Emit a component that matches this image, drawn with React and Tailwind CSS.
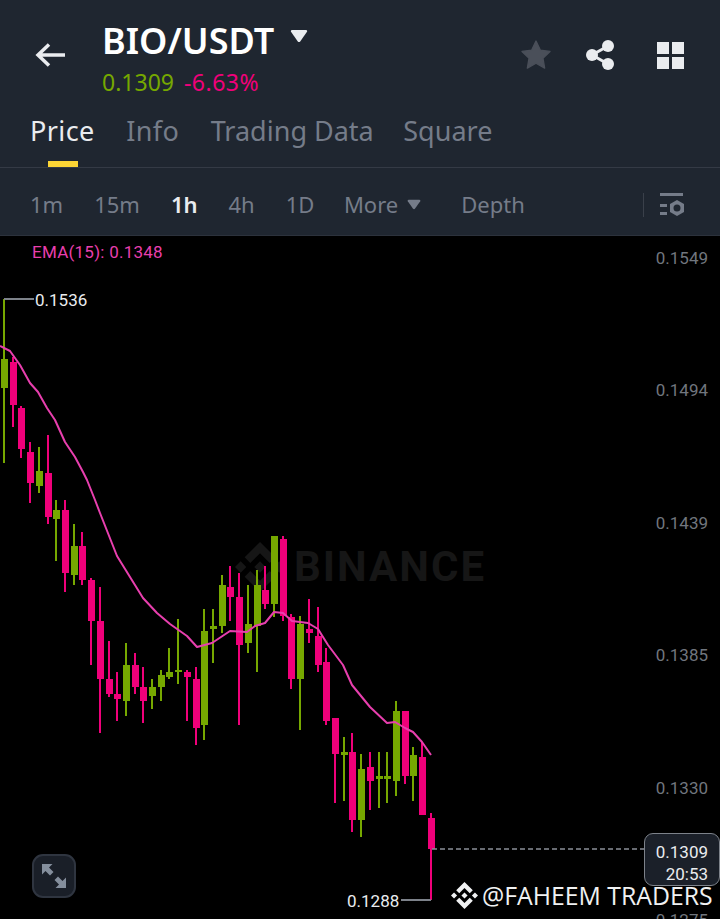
import React from 'react';

const GREEN = '#76a800';
const PINK = '#f0007a';

// color, wick top, wick bottom, body top, body bottom
const candles = [
  ['g', 299, 463, 359, 388], ['r', 357, 427, 362, 405], ['r', 406, 458, 408, 449], ['r', 442, 503, 452, 483],
  ['g', 447, 493, 471, 486], ['r', 435, 524, 473, 517], ['g', 500, 561, 510, 519], ['r', 500, 592, 510, 573],
  ['g', 524, 585, 546, 575], ['r', 532, 585, 546, 580], ['r', 578, 665, 580, 621], ['r', 587, 733, 621, 679],
  ['r', 641, 697, 679, 694], ['r', 672, 721, 694, 699], ['g', 643, 716, 665, 701], ['r', 653, 694, 665, 687],
  ['r', 667, 723, 687, 701], ['g', 679, 709, 687, 696], ['g', 670, 701, 675, 687], ['g', 648, 679, 672, 677],
  ['g', 619, 684, 670, 672], ['r', 670, 721, 672, 677], ['r', 667, 745, 679, 728], ['g', 609, 740, 631, 725],
  ['g', 609, 663, 626, 629], ['g', 575, 633, 585, 626], ['r', 566, 621, 587, 597], ['r', 573, 725, 597, 645],
  ['g', 585, 653, 624, 643], ['g', 570, 672, 585, 626], ['r', 566, 609, 590, 604], ['g', 536, 617, 536, 604],
  ['r', 536, 621, 539, 616], ['r', 614, 689, 617, 679], ['g', 616, 730, 624, 679], ['r', 599, 643, 629, 633],
  ['r', 607, 672, 636, 665], ['r', 648, 725, 662, 721], ['r', 718, 803, 718, 754], ['g', 737, 801, 752, 755],
  ['r', 733, 832, 752, 820], ['g', 754, 837, 769, 820], ['r', 752, 810, 767, 781], ['g', 752, 808, 776, 779],
  ['g', 752, 803, 776, 779], ['g', 701, 796, 711, 781], ['r', 711, 784, 711, 776], ['g', 747, 801, 755, 776],
  ['r', 742, 815, 757, 815], ['r', 813, 900, 818, 849],
];

const ema = '0,346 10,351 20,365 30,383 38,392 47,408 55,420 65,442 75,457 83,472 87,480 95,500 100,513 117,556 143,598 157,613 170,624 187,636 197,647 212,643 230,631 247,632 255,626 265,623 274,612 283,613 292,621 300,622 308,623 318,629 328,645 343,665 352,685 370,707 387,723 395,722 405,728 413,732 422,742 431,755';

const axisLabels = ['0.1549', '0.1494', '0.1439', '0.1385', '0.1330', '0.1275'];
const BINANCE_PATH = 'm38.73 53.2 24.59-24.58 24.6 24.6 14.3-14.31L63.32 0 24.42 38.9zM0 63.31l14.3-14.31 14.31 14.31-14.31 14.3zM38.73 73.41 63.32 98l24.6-24.6 14.31 14.29-38.9 38.91-38.91-38.88zM98 63.31l14.3-14.31 14.31 14.3-14.31 14.32zM77.83 63.3 63.32 48.78 52.59 59.51l-1.24 1.23-2.54 2.54 14.51 14.5 14.51-14.47z';

const Triangle = ({ className }) => (
  <svg viewBox="0 0 18 14" className={className} fill="currentColor">
    <path d="M2 1h14c1 0 1.500 1 1 1.800L10.200 12.400c-.6.800-1.800.8-2.400 0L1 2.800C.5 2 1 1 2 1z" />
  </svg>
);

const Chart = () => (
  <div className="relative flex-1 overflow-hidden bg-black font-['Roboto',sans-serif]">
    {/* watermark sits under the candles */}
    <div className="absolute left-[235px] top-[306px] flex items-center gap-[9px] text-[#161616]">
      <svg viewBox="0 0 126.61 126.61" className="h-[50px] w-[50px]" fill="currentColor">
        <path d={BINANCE_PATH} />
      </svg>
      <span className="text-[42px] font-bold leading-none tracking-[2px]">BINANCE</span>
    </div>

    {/* chart coordinates are page coordinates, hence the viewBox offset */}
    <svg viewBox="0 236 720 683" className="absolute inset-0 h-[683px] w-[720px]">
      <g shapeRendering="crispEdges">
        {candles.map(([c, wt, wb, bt, bb], i) => {
          const x = Math.round(4 + i * 8.71);
          const fill = c === 'g' ? GREEN : PINK;
          return (
            <g key={i} fill={fill}>
              <rect x={x - 1} y={wt} width="2" height={wb - wt} />
              <rect x={x - 3} y={bt} width="7" height={bb - bt} />
            </g>
          );
        })}
        <rect x="4" y="298" width="30" height="1.500" fill="#7d828a" />
        <rect x="401" y="899" width="30" height="1.500" fill="#7d828a" />
      </g>
      <polyline points={ema} fill="none" stroke="#e83fae" strokeWidth="2" strokeLinejoin="round" />
      <line x1="432" y1="849" x2="644" y2="849" stroke="#8a8f98" strokeWidth="1.500" strokeDasharray="5 3" />
    </svg>

    <div className="absolute left-[32px] top-[5px] text-[17px] leading-[22px] tracking-[0.25px] text-[#e83fae]">EMA(15): 0.1348</div>
    <div className="absolute left-[35px] top-[53px] text-[17px] leading-[22px] text-[#eaecef]">0.1536</div>
    <div className="absolute left-[347px] top-[654px] text-[17px] leading-[22px] text-[#eaecef]">0.1288</div>

    {/* right price axis */}
    <div className="absolute right-[12px] top-[11px] flex flex-col items-end">
      {axisLabels.map((label) => (
        <div key={label} className="h-[132.4px] text-[17px] leading-[22px] text-[#71767e]">{label}</div>
      ))}
    </div>

    <div className="absolute left-[32px] top-[618px] flex h-[44px] w-[44px] items-center justify-center rounded-[11px] border-2 border-[#2f3540] bg-[#1a1f28]">
      <svg viewBox="0 0 28 28" className="h-[28px] w-[28px]" fill="#848e9c">
        <path d="M2 2h10.500L9 5.500l4.500 4.500-3.500 3.500L5.500 9 2 12.500z" />
        <path d="M26 26H15.500l3.500-3.500-4.500-4.500 3.500-3.500 4.500 4.500 3.500-3.500z" />
      </svg>
    </div>

    <div className="absolute left-[644px] top-[597px] flex h-[53px] w-[76px] flex-col items-end justify-center rounded-[9px] border border-[#7d828a] bg-[#1b2029] pr-[11px] pt-[7px] text-[17px] leading-[22px] text-[#eaecef]">
      <span>0.1309</span>
      <span>20:53</span>
    </div>

    <div className="absolute left-[451px] top-[642px] flex items-center gap-[4px] text-[#f0f1f2]">
      <svg viewBox="0 0 126.61 126.61" className="h-[27px] w-[27px]" fill="currentColor">
        <path d={BINANCE_PATH} />
      </svg>
      <span className="font-['Open_Sans',sans-serif] text-[24.8px] leading-[34px]">@FAHEEM TRADERS</span>
    </div>
  </div>
);

export default function App() {
  return (
    <div className="flex h-[919px] w-[720px] flex-col overflow-hidden bg-black font-['Noto_Sans',sans-serif]">
      <div className="flex h-[236px] flex-col border-b border-[#2c323c] bg-[#1f2630]">
        <div className="flex h-[106px] items-start">
          <div className="ml-[35px] mt-[43px] w-[67px]">
            <svg viewBox="0 0 30 24" className="h-[24px] w-[30px]" fill="none" stroke="#eaecef" strokeWidth="3.500">
              <path d="M30 12H3M14 1.500 3 12l11 10.500" />
            </svg>
          </div>
          <div className="flex-1 pt-[18px]">
            <div className="flex items-start">
              <span className="text-[36px] font-semibold leading-[46px] text-white">BIO/USDT</span>
              <Triangle className="ml-[16px] mt-[11px] h-[14px] w-[18px] text-[#eaecef]" />
            </div>
            <div className="flex gap-[10px] pt-[3px] text-[23px] leading-[30px]">
              <span className="text-[#76a800]">0.1309</span>
              <span className="tracking-[0.5px] text-[#f0007a]">-6.63%</span>
            </div>
          </div>
          <div className="mr-[36px] mt-[39px] flex items-center">
            <svg viewBox="0 0 24 24" className="h-[32px] w-[32px]" fill="#4a4f59">
              <path d="M12 1.500l3.200 6.800 7.300 1-5.300 5.100 1.300 7.400-6.500-3.600-6.500 3.600 1.300-7.400L1.500 9.300l7.300-1z" stroke="#4a4f59" strokeLinejoin="round" />
            </svg>
            <svg viewBox="0 0 32 32" className="ml-[33px] h-[32px] w-[32px]" fill="#eaecef" stroke="#eaecef">
              <line x1="7" y1="16" x2="23" y2="7" strokeWidth="3" />
              <line x1="7" y1="16" x2="23" y2="25" strokeWidth="3" />
              <circle cx="7" cy="16" r="6" stroke="none" />
              <circle cx="23" cy="7" r="6" stroke="none" />
              <circle cx="23" cy="25" r="6" stroke="none" />
            </svg>
            <div className="ml-[40px] grid grid-cols-[12px_12px] grid-rows-[12px_12px] gap-[3px]">
              <div className="bg-[#eaecef]" />
              <div className="bg-[#eaecef]" />
              <div className="bg-[#eaecef]" />
              <div className="bg-[#eaecef]" />
            </div>
          </div>
        </div>

        <div className="flex h-[62px] items-start gap-[31.5px] border-b border-[#343a45] pl-[30px] text-[27px] leading-[50px] text-[#757c89]">
          <div className="relative h-[61px] tracking-[0.4px] text-[#eaecef]">
            Price
            <div className="absolute bottom-0 left-[18px] h-[6px] w-[30px] bg-[#fcd535]" />
          </div>
          <div className="tracking-[0.4px]">Info</div>
          <div>Trading Data</div>
          <div className="-ml-[2px]">Square</div>
        </div>

        <div className="flex flex-1 items-center gap-[31px] pl-[30px] pt-[6px] text-[22px] text-[#757c89]">
          <span>1m</span>
          <span>15m</span>
          <span className="font-semibold text-[#eaecef]">1h</span>
          <span>4h</span>
          <span>1D</span>
          <span className="-ml-[1.5px] flex items-center gap-[9px]">
            More
            <Triangle className="h-[11px] w-[14px]" />
          </span>
          <span className="ml-[9px]">Depth</span>
          <div className="ml-auto mr-[36px] flex items-center gap-[16px]">
            <div className="h-[24px] w-[1px] bg-[#3a404a]" />
            <svg viewBox="0 0 24 24" className="h-[24px] w-[24px]" fill="#757c89">
              <rect x="0" y="0" width="23" height="3" />
              <rect x="0" y="11" width="7" height="3" />
              <rect x="0" y="19" width="7" height="3" />
              <path fillRule="evenodd" d="M17 7l7 4v8l-7 4-7-4v-8zM17 11.500a3.500 3.500 0 1 0 0 7 3.500 3.500 0 0 0 0-7z" />
            </svg>
          </div>
        </div>
      </div>
      <Chart />
    </div>
  );
}
